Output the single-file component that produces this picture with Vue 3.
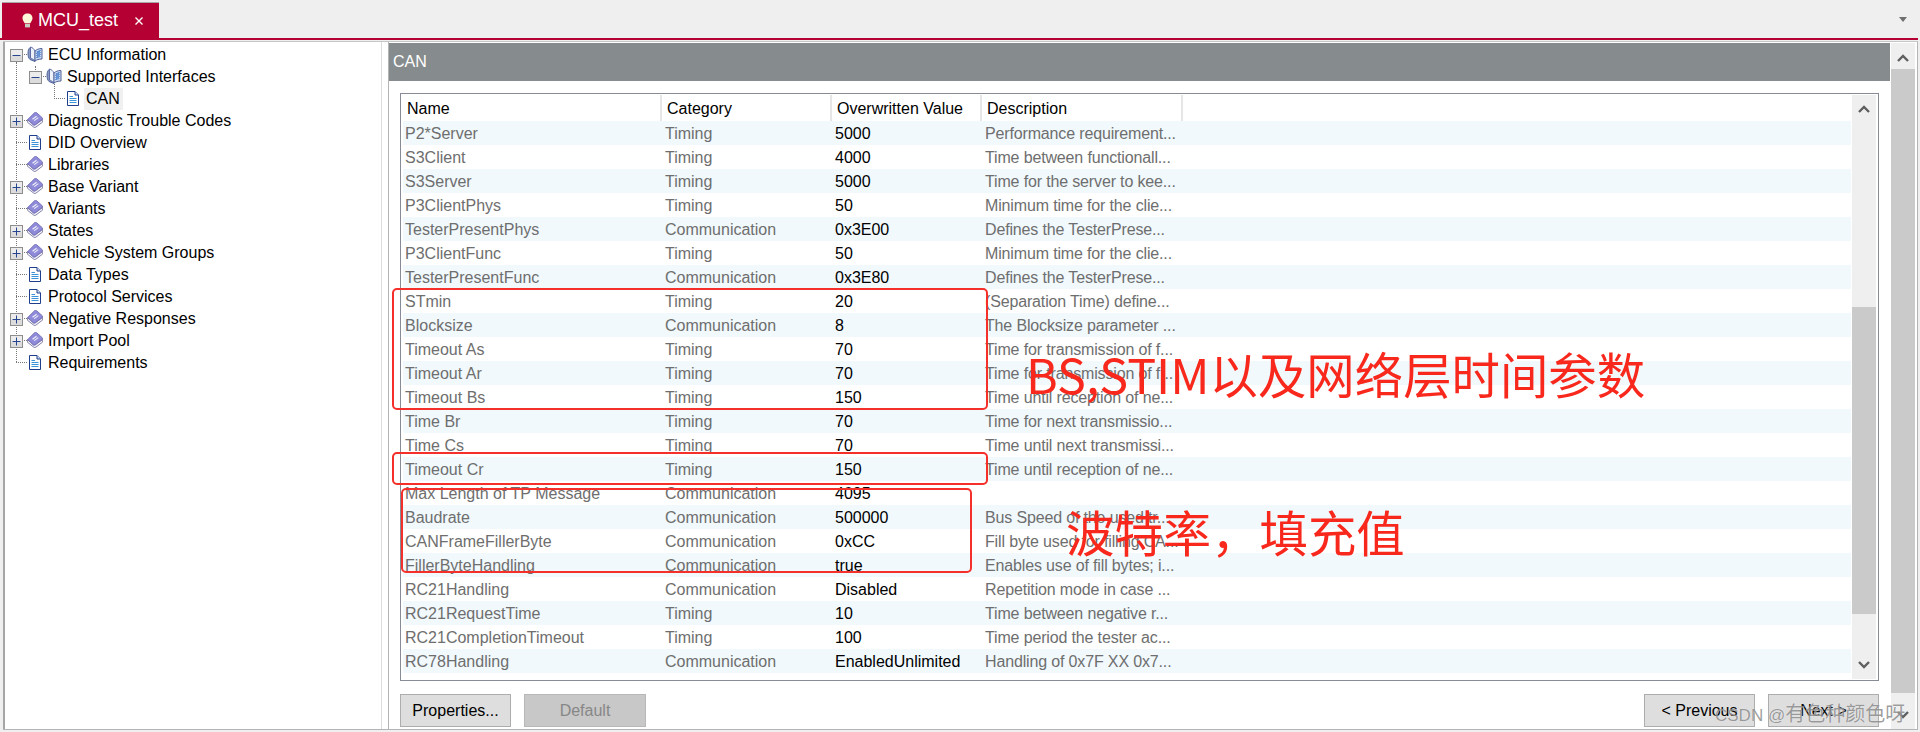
<script setup>
const tree = [
  { label: 'ECU Information', icon: 'open', depth: 0, toggle: '-' },
  { label: 'Supported Interfaces', icon: 'open', depth: 1, toggle: '-' },
  { label: 'CAN', icon: 'doc', depth: 2, selected: true },
  { label: 'Diagnostic Trouble Codes', icon: 'book', depth: 0, toggle: '+' },
  { label: 'DID Overview', icon: 'doc', depth: 0 },
  { label: 'Libraries', icon: 'book', depth: 0 },
  { label: 'Base Variant', icon: 'book', depth: 0, toggle: '+' },
  { label: 'Variants', icon: 'book', depth: 0 },
  { label: 'States', icon: 'book', depth: 0, toggle: '+' },
  { label: 'Vehicle System Groups', icon: 'book', depth: 0, toggle: '+' },
  { label: 'Data Types', icon: 'doc', depth: 0 },
  { label: 'Protocol Services', icon: 'doc', depth: 0 },
  { label: 'Negative Responses', icon: 'book', depth: 0, toggle: '+' },
  { label: 'Import Pool', icon: 'book', depth: 0, toggle: '+' },
  { label: 'Requirements', icon: 'doc', depth: 0 }
]

const columns = ['Name', 'Category', 'Overwritten Value', 'Description']

const rows = [
  ['P2*Server', 'Timing', '5000', 'Performance requirement...'],
  ['S3Client', 'Timing', '4000', 'Time between functionall...'],
  ['S3Server', 'Timing', '5000', 'Time for the server to kee...'],
  ['P3ClientPhys', 'Timing', '50', 'Minimum time for the clie...'],
  ['TesterPresentPhys', 'Communication', '0x3E00', 'Defines the TesterPrese...'],
  ['P3ClientFunc', 'Timing', '50', 'Minimum time for the clie...'],
  ['TesterPresentFunc', 'Communication', '0x3E80', 'Defines the TesterPrese...'],
  ['STmin', 'Timing', '20', '(Separation Time) define...'],
  ['Blocksize', 'Communication', '8', 'The Blocksize parameter ...'],
  ['Timeout As', 'Timing', '70', 'Time for transmission of f...'],
  ['Timeout Ar', 'Timing', '70', 'Time for transmission of f...'],
  ['Timeout Bs', 'Timing', '150', 'Time until reception of ne...'],
  ['Time Br', 'Timing', '70', 'Time for next transmissio...'],
  ['Time Cs', 'Timing', '70', 'Time until next transmissi...'],
  ['Timeout Cr', 'Timing', '150', 'Time until reception of ne...'],
  ['Max Length of TP Message', 'Communication', '4095', ''],
  ['Baudrate', 'Communication', '500000', 'Bus Speed of the used tr...'],
  ['CANFrameFillerByte', 'Communication', '0xCC', 'Fill byte used for filling CA...'],
  ['FillerByteHandling', 'Communication', 'true', 'Enables use of fill bytes; i...'],
  ['RC21Handling', 'Communication', 'Disabled', 'Repetition mode in case ...'],
  ['RC21RequestTime', 'Timing', '10', 'Time between negative r...'],
  ['RC21CompletionTimeout', 'Timing', '100', 'Time period the tester ac...'],
  ['RC78Handling', 'Communication', 'EnabledUnlimited', 'Handling of 0x7F XX 0x7...']
]
</script>

<template>
  <div class="app">
    <header class="tabbar">
      <div class="tab">
        <svg class="bulb" width="11" height="15" viewBox="0 0 11 15">
          <path d="M5.5 0.5C2.5 0.5 0.5 2.6 0.5 5.2c0 2 1.3 3.2 2.2 5h5.6c0.9-1.8 2.2-3 2.2-5C10.5 2.6 8.5 0.5 5.5 0.5z" fill="#fff8d8" />
          <rect x="3" y="10.8" width="5" height="3.6" fill="#c9c9c0" />
        </svg>
        <span class="tab-title">MCU_test</span>
        <svg class="tab-close" width="8" height="8" viewBox="0 0 8 8">
          <path d="M0.5 0.5L7.5 7.5M7.5 0.5L0.5 7.5" stroke="#fff" stroke-width="1.4" />
        </svg>
      </div>
      <svg class="tab-menu" width="8" height="5" viewBox="0 0 8 5"><path d="M0 0H8L4 5Z" fill="#6f6f6f" /></svg>
    </header>

    <div class="panels">
      <aside class="tree">
        <i class="trunk"></i>
        <div
          v-for="node in tree"
          :key="node.label"
          class="node"
          :class="'depth' + node.depth"
        >
          <i class="hline"></i>
          <span v-if="node.toggle" class="toggle">
            <svg width="13" height="13" viewBox="0 0 13 13">
              <rect x="0.5" y="0.5" width="12" height="12" fill="#ececec" stroke="#8d8d8d" />
              <rect x="1" y="7" width="11" height="5" fill="#dcdcdc" />
              <path d="M2.5 6.5H10.5" stroke="#25468f" />
              <path v-if="node.toggle === '+'" d="M6.5 2.5V10.5" stroke="#25468f" />
            </svg>
          </span>
          <span class="icon">
            <svg v-if="node.icon === 'open'" width="16" height="16" viewBox="0 0 16 16">
              <path d="M3 1.5C1.5 3 1 5 1 7.5C1 10 1.5 12 3 13.5L8 15.5V5Z" fill="#8b9ac4" stroke="#4f6296" />
              <path d="M3.5 1C5.5 1.5 7 3 8 5V15C6.5 13.5 5 12.5 3.5 12Z" fill="#eef1fa" stroke="#5d6ea8" />
              <path d="M8 5C9.5 3.5 12 2.5 15 2.5V13C12 13 9.5 13.8 8 15Z" fill="#cfdaf2" stroke="#4f6296" />
              <path d="M9.5 6L13.5 4.5M13.5 4.5L9.5 7.5M9.5 7.5L13.5 6.5M13.5 6.5L9.5 9.5M9.5 9.5L13.5 8.5M13.5 8.5L9.5 11.5M9.5 11.5L13.5 10.5" stroke="#3d78c8" fill="none" stroke-width="0.9" />
            </svg>
            <svg v-else-if="node.icon === 'book'" width="16" height="16" viewBox="0 0 16 16">
              <path d="M0.6 7.6V10.4L6.8 15.2Q7.8 15.8 8.8 15.2L15.7 10V7.4L8.3 12.8Q7.3 13.4 6.3 12.8Z" fill="#f3f3fa" stroke="#77759f" stroke-width="0.9" />
              <path d="M0.6 7.6L7.6 0.7Q8.6 0 9.6 0.7L15.4 5.9Q16.1 6.9 15.1 7.6L8.3 12.7Q7.3 13.3 6.3 12.7Z" fill="#8f8bd8" stroke="#6f6bb6" stroke-width="0.9" />
              <path d="M5.5 7.2L9.6 4.2M7.2 8.6L11.3 5.6" stroke="#f2f1fb" stroke-width="1.1" />
            </svg>
            <svg v-else width="12" height="15" viewBox="0 0 12 15">
              <path d="M0.5 0.5H8L11.5 4V14.5H0.5Z" fill="#fff" stroke="#1f3f8c" />
              <path d="M8 0.5V4H11.5" fill="#cfdcf2" stroke="#1f3f8c" />
              <path d="M2.5 5.5H6M2.5 7.5H9.5M2.5 9.5H9.5M2.5 11.5H9.5" stroke="#3c93d8" />
            </svg>
          </span>
          <span class="node-label" :class="{ selected: node.selected }">{{ node.label }}</span>
        </div>
      </aside>

      <section class="editor">
        <div class="editor-main">
          <h2 class="section-title">CAN</h2>
          <div class="table">
            <div class="table-body">
              <div class="thead">
                <span v-for="col in columns" :key="col" class="th">{{ col }}</span>
              </div>
              <div v-for="(row, idx) in rows" :key="row[0]" class="tr" :class="{ odd: idx % 2 === 0 }">
                <span class="td">{{ row[0] }}</span>
                <span class="td">{{ row[1] }}</span>
                <span class="td value">{{ row[2] }}</span>
                <span class="td desc">{{ row[3] }}</span>
              </div>
            </div>
            <div class="scroll inner">
              <svg class="arrow" width="12" height="8" viewBox="0 0 12 8"><path d="M1 7L6 2L11 7" fill="none" stroke="#5f5f5f" stroke-width="2.4" /></svg>
              <div class="gutter"><div class="thumb inner-thumb"></div></div>
              <svg class="arrow" width="12" height="8" viewBox="0 0 12 8"><path d="M1 1L6 6L11 1" fill="none" stroke="#5f5f5f" stroke-width="2.4" /></svg>
            </div>
          </div>
          <footer class="actions">
            <button class="btn">Properties...</button>
            <button class="btn off">Default</button>
            <span class="spacer"></span>
            <button class="btn">&lt; Previous</button>
            <button class="btn">Next &gt;</button>
          </footer>
        </div>
        <div class="scroll outer">
          <svg class="arrow" width="12" height="8" viewBox="0 0 12 8"><path d="M1 7L6 2L11 7" fill="none" stroke="#5f5f5f" stroke-width="2.4" /></svg>
          <div class="gutter"><div class="thumb outer-thumb"></div></div>
          <svg class="arrow" width="12" height="8" viewBox="0 0 12 8"><path d="M1 1L6 6L11 1" fill="none" stroke="#5f5f5f" stroke-width="2.4" /></svg>
        </div>
      </section>
    </div>

    <!-- red annotations painted over the screenshot -->
    <div class="mark m1"></div>
    <div class="mark m2"></div>
    <div class="mark m3"></div>
    <div class="note n1">BS,STIM以及网络层时间参数</div>
    <div class="note n2">波特率，填充值</div>
    <div class="watermark">CSDN @<span class="wm-cn">有色种颜色呀</span></div>
  </div>
</template>

<style scoped>
.app {
  position: relative;
  width: 1920px;
  height: 732px;
  overflow: hidden;
  background: #efefef;
  font-family: "Liberation Sans", Arial, sans-serif;
  font-size: 16px;
  color: #000;
  display: flex;
  flex-direction: column;
}

.tabbar {
  height: 40px;
  box-sizing: border-box;
  margin-right: 2px;
  padding: 3px 0 0 2px;
  border-bottom: 2px solid #b50033;
  display: flex;
  justify-content: space-between;
}
.tab {
  width: 157px;
  height: 35px;
  background: #b50033;
  box-shadow: 0 -1px 0 #a9a9a9;
  color: #fff;
  display: flex;
  align-items: center;
  padding-left: 20px;
  box-sizing: border-box;
}
.bulb {
  margin-right: 5px;
}
.tab-title {
  font-size: 18px;
}
.tab-close {
  margin-left: 17px;
}
.tab-menu {
  margin: 14px 11px 0 0;
}

.panels {
  height: 690px;
  margin: 1px 2px 2px 3px;
  display: flex;
  justify-content: space-between;
  background: #fff;
  box-sizing: border-box;
  border-top: 1px solid #c6c6c6;
  border-bottom: 1px solid #b4b4b4;
}

.tree {
  position: relative;
  width: 379px;
  box-sizing: border-box;
  padding-top: 2px;
  border-left: 2px solid #a6a6a6;
  border-right: 1px solid #dcdcdc;
}
.trunk {
  position: absolute;
  left: 11px;
  top: 20px;
  height: 300px;
  border-left: 1px dotted #777;
}
.node {
  position: relative;
  height: 22px;
  display: flex;
  align-items: center;
}
.hline {
  position: absolute;
  top: 10px;
  left: 11px;
  width: 11px;
  border-top: 1px dotted #777;
}
.toggle {
  position: absolute;
  left: 5px;
  top: 5px;
  width: 13px;
  height: 13px;
  background: #fff;
  line-height: 0;
}
.icon {
  width: 16px;
  height: 20px;
  margin: 0 5px 2px 22px;
  display: flex;
  align-items: center;
  justify-content: center;
  background: #fff;
  position: relative;
}
.depth1 .icon {
  margin-left: 41px;
}
.depth1 .toggle {
  left: 24px;
}
.depth1 .hline {
  left: 30px;
}
.depth1 .hline::before {
  content: "";
  position: absolute;
  left: 0;
  top: -11px;
  height: 6px;
  border-left: 1px dotted #777;
}
.depth2 .icon {
  margin-left: 60px;
  margin-right: 3px;
}
.depth2 .hline {
  left: 49px;
}
.depth2 .hline::before {
  content: "";
  position: absolute;
  left: 0;
  top: -15px;
  height: 15px;
  border-left: 1px dotted #777;
}
.node-label {
  line-height: 22px;
  white-space: nowrap;
}
.selected {
  background: #f0f0f0;
  padding: 0 3px 0 2px;
}

.editor {
  width: 1530px;
  box-sizing: border-box;
  border-left: 1px solid #b4b4b4;
  border-right: 1px solid #b4b4b4;
  padding-top: 1px;
  display: flex;
}
.editor-main {
  width: 1501px;
  display: flex;
  flex-direction: column;
}
.section-title {
  margin: 0;
  height: 38px;
  line-height: 38px;
  padding-left: 4px;
  font-size: 16px;
  font-weight: normal;
  background: #868c8d;
  color: #fff;
}

.table {
  margin: 12px 11px 0;
  height: 588px;
  box-sizing: border-box;
  border: 1px solid #878b95;
  padding: 1px 1px 1px 2px;
  display: flex;
}
.table-body {
  width: 1448px;
}
.thead {
  height: 26px;
  display: grid;
  grid-template-columns: 259px 170px 150px 201px;
}
.th {
  height: 26px;
  line-height: 28px;
  padding-left: 5px;
  border-right: 2px solid #e6e6e6;
}
.th:first-child {
  padding-left: 4px;
}
.tr {
  height: 24px;
  line-height: 26px;
  display: grid;
  grid-template-columns: 260px 170px 150px 1fr;
  color: #6e6e6e;
}
.tr.odd {
  background: #f1f9fd;
}
.td {
  height: 24px;
  padding-left: 2px;
  white-space: nowrap;
}
.value {
  color: #000;
}
.desc {
  letter-spacing: -0.15px;
}

.scroll {
  display: flex;
  flex-direction: column;
  align-items: center;
  background: #efefef;
  width: 24px;
}
.arrow {
  flex: none;
}
.gutter {
  flex: 1;
  width: 100%;
}
.thumb {
  width: 100%;
  background: #cacaca;
}

.inner {
  margin-left: 1px;
}
.inner .arrow:first-child {
  margin: 10px 0 0;
}
.inner .arrow:last-child {
  margin: 0 0 10px;
}
.inner-thumb {
  height: 307px;
  margin-top: 194px;
}
.outer {
  margin-left: 1px;
}
.outer .arrow:first-child {
  margin: 11px 0 7px;
}
.outer .arrow:last-child {
  margin: 0 0 10px;
}
.outer-thumb {
  height: 624px;
}

.actions {
  margin: 13px 11px 0;
  display: flex;
  gap: 13px;
}
.spacer {
  flex: 1;
}
.btn {
  width: 111px;
  height: 33px;
  padding: 0;
  box-sizing: border-box;
  border: 1px solid #adadad;
  background: #dedede;
  font: inherit;
  color: #000;
}
.btn.off {
  width: 122px;
  background: #c8c8c8;
  border-color: #b8b8b8;
  color: #878787;
}

.mark {
  position: absolute;
  box-sizing: border-box;
  border: 2px solid #f5302a;
  border-radius: 5px;
}
.m1 {
  left: 392px;
  top: 288px;
  width: 596px;
  height: 122px;
}
.m2 {
  left: 392px;
  top: 452px;
  width: 596px;
  height: 33px;
}
.m3 {
  left: 401px;
  top: 488px;
  width: 571px;
  height: 85px;
}
.note {
  position: absolute;
  font-family: "Noto Sans CJK SC", sans-serif;
  font-size: 48.4px;
  line-height: 60px;
  color: #f8281c;
  white-space: nowrap;
}
.n1 {
  left: 1026px;
  top: 343px;
}
.n2 {
  left: 1066px;
  top: 501px;
}
.watermark {
  position: absolute;
  left: 1715px;
  top: 701px;
  font-family: "Liberation Sans", "Noto Sans CJK SC", sans-serif;
  font-size: 17px;
  line-height: 24px;
  color: rgba(90, 90, 90, 0.6);
  text-shadow: 0 0 1px rgba(255, 255, 255, 0.8);
  white-space: nowrap;
}
.wm-cn {
  font-size: 20px;
  font-family: "Noto Sans CJK SC", sans-serif;
}
</style>
